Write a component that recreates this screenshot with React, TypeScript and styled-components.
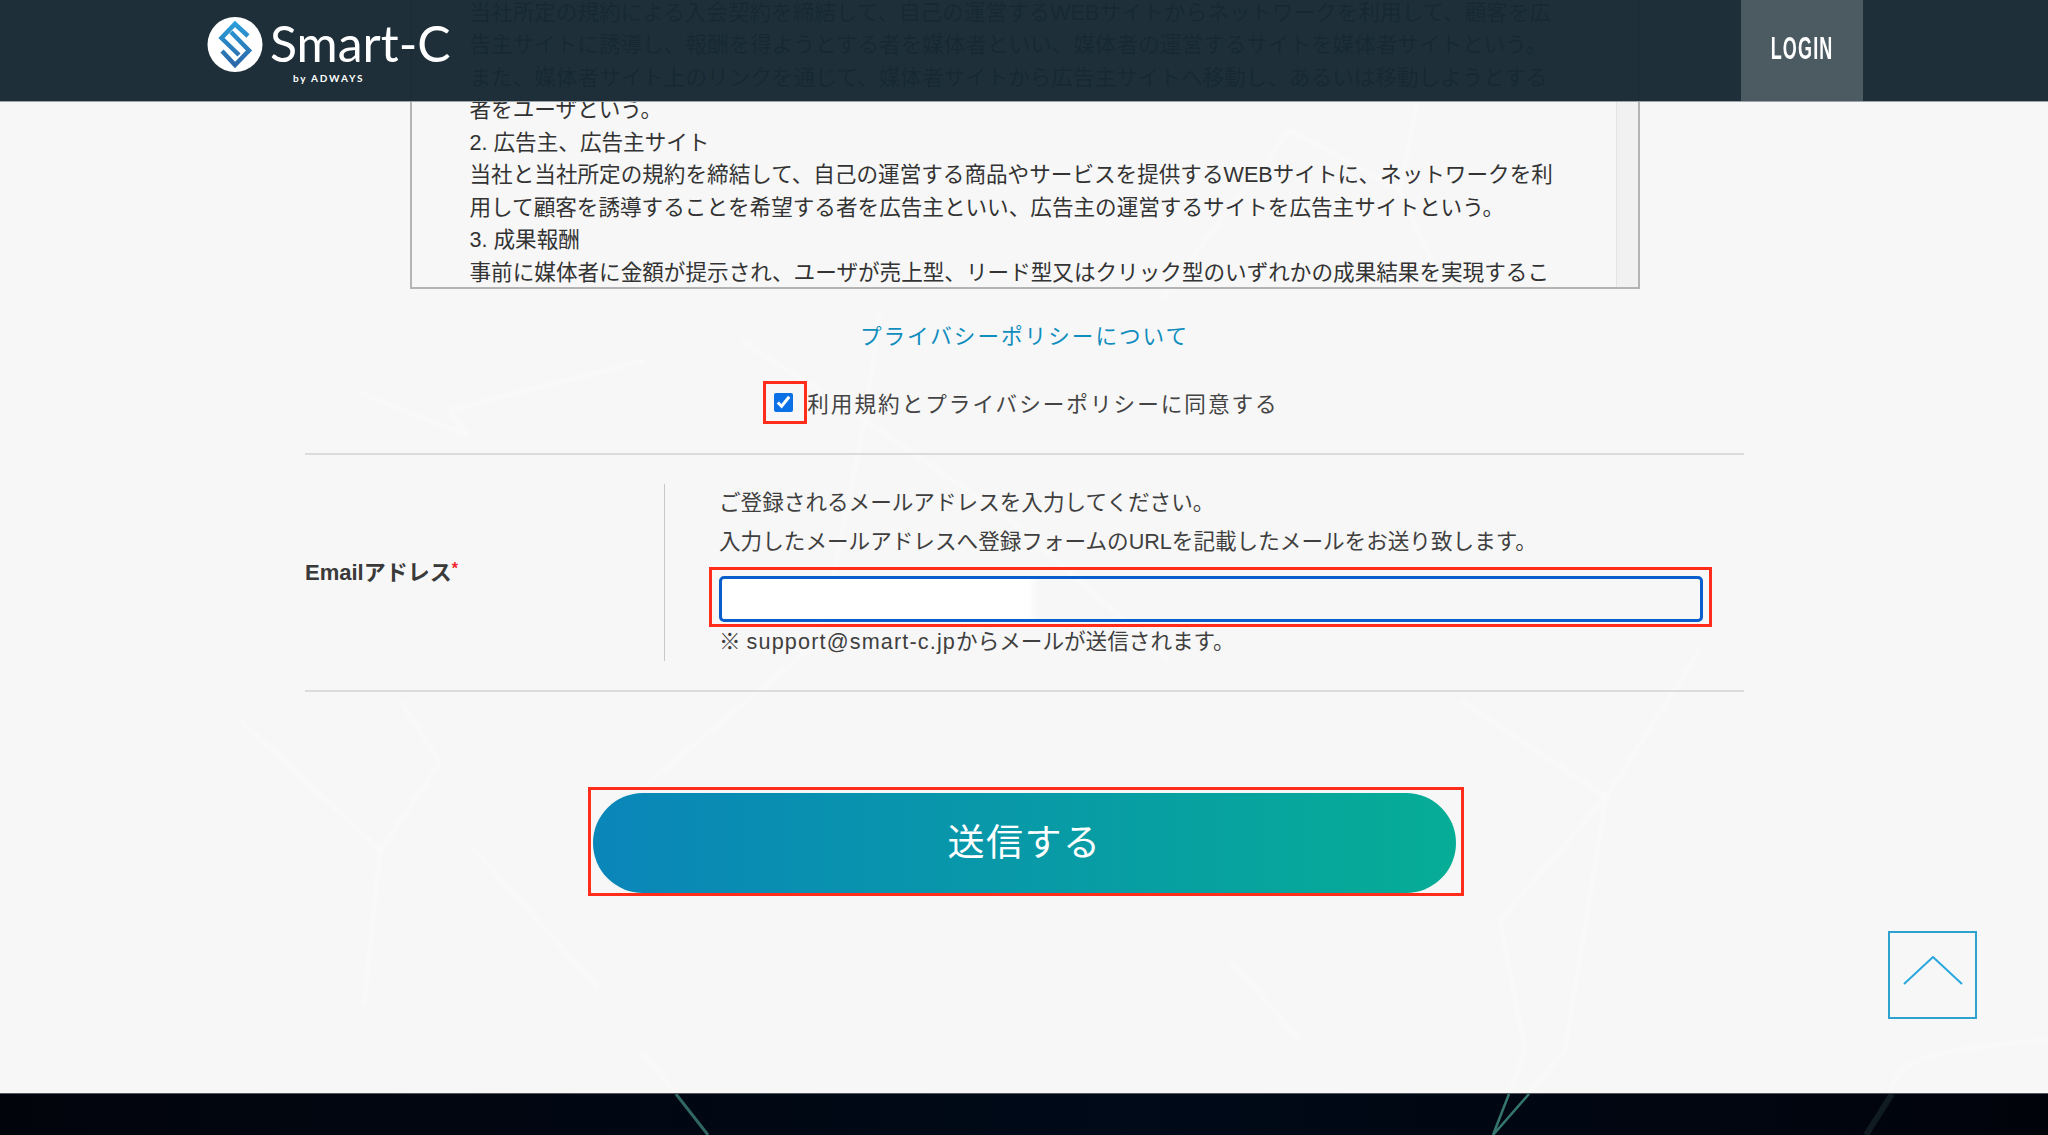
import React from "react";
import styled, { createGlobalStyle } from "styled-components";

const GlobalStyle = createGlobalStyle`
  html, body {
    margin: 0;
    padding: 0;
    background: #f7f7f7;
    color: #333;
    font-family: "Liberation Sans", "Noto Sans CJK JP", sans-serif;
  }
  * {
    box-sizing: border-box;
  }
`;

const Page = styled.div`
  position: relative;
  display: flex;
  flex-direction: column;
  height: 1135px;
  overflow: hidden;
`;

const Backdrop = styled.svg`
  position: absolute;
  inset: 0;
  width: 100%;
  height: 100%;
  filter: blur(2px);
`;

const Header = styled.header`
  position: absolute;
  top: 0;
  left: 0;
  right: 0;
  z-index: 2;
  display: flex;
  justify-content: space-between;
  height: 102px;
  padding: 0 185px 0 207px;
  background: rgba(23, 40, 51, 0.97);
  border-bottom: 1px solid #9aa3a8;
`;

const Logo = styled.div`
  display: flex;
  gap: 7px;
  padding-top: 17px;
`;

const LogoName = styled.div`
  display: flex;
  flex-direction: column;
  align-items: flex-start;
  padding-top: 3px;
  color: #fff;
`;

const LogoTitle = styled.span`
  font-family: Lato, sans-serif;
  font-weight: 400;
  font-size: 50px;
  line-height: 46px;
`;

const LogoSub = styled.span`
  margin: 6px 0 0 23px;
  font-family: Lato, sans-serif;
  font-size: 10px;
  font-weight: 700;
  line-height: 12px;
  letter-spacing: 1.8px;
`;

const LoginLink = styled.a`
  display: flex;
  justify-content: center;
  align-items: center;
  width: 122px;
  height: 101px;
  padding-bottom: 4px;
  background: #4c5a62;
  color: #fff;
  font-size: 31px;
  font-weight: 700;
  letter-spacing: 2px;

  span {
    transform: scaleX(0.58);
  }
`;

const Main = styled.main`
  position: relative;
  z-index: 1;
  display: flex;
  flex-direction: column;
  align-items: center;
  width: 1439px;
  margin-left: 305px;
`;

const TermsBox = styled.div`
  width: 1230px;
  height: 289px;
  padding-left: 58px;
  border: 2px solid #b4b4b4;
  border-top: none;
  overflow: hidden;
  position: relative;
  font-size: 21.6px;
  line-height: 32.45px;
  white-space: nowrap;

  &::after {
    content: "";
    position: absolute;
    top: 0;
    right: 0;
    bottom: 0;
    width: 21px;
    background: #f1f1f1;
    border-left: 1px solid #e4e4e4;
  }
`;

const TermsText = styled.div`
  margin-top: -3px;
`;

const PolicyLink = styled.a`
  margin-top: 32px;
  color: #0f8dbd;
  font-size: 21.6px;
  line-height: 32px;
  letter-spacing: 2px;
`;

const ConsentRow = styled.label`
  display: flex;
  align-items: center;
  margin-top: 28px;
  margin-right: 7px;
  font-size: 21.6px;
  letter-spacing: 2px;
  color: #444;
`;

const CheckFrame = styled.span`
  display: flex;
  justify-content: center;
  align-items: center;
  width: 44px;
  height: 43px;
  border: 3px solid #ff2d1a;

  input {
    width: 19px;
    height: 19px;
    margin: 0 3px 0 0;
    accent-color: #0b6fe6;
  }
`;

const FormRow = styled.section`
  display: grid;
  grid-template-columns: 359px 1fr;
  width: 100%;
  margin-top: 29px;
  padding: 29px 0;
  border-top: 2px solid #dcdcdc;
  border-bottom: 2px solid #dcdcdc;
`;

const FieldLabel = styled.div`
  align-self: center;
  margin-top: -5px;
  font-size: 22px;
  font-weight: 700;
  color: #3a3a3a;

  em {
    color: #f0282c;
    font-style: normal;
    font-size: 16px;
    vertical-align: 6px;
  }
`;

const FieldBody = styled.div`
  padding-left: 54px;
  border-left: 1px solid #c8c8c8;
  font-size: 21.6px;
  line-height: 39px;
  color: #3f3f3f;
`;

const FieldHints = styled.div`
  margin-top: -1px;
`;

const InputFrame = styled.div`
  width: 1003px;
  height: 60px;
  margin: 6px 0 0 -10px;
  padding: 6px 6px 0 7px;
  border: 3px solid #ff2d1a;
`;

const EmailInput = styled.input`
  display: block;
  width: 100%;
  height: 46px;
  border: 3px solid #0a5ecb;
  border-radius: 5px;
  outline: none;
  background: linear-gradient(90deg, #fff 306px, rgba(255, 255, 255, 0) 316px);
`;

const Note = styled.div`
  padding-bottom: 5px;
  line-height: 29px;
`;

const NoteMail = styled.span`
  letter-spacing: 1.15px;
`;

const SubmitFrame = styled.div`
  width: 876px;
  height: 109px;
  margin: 95px 0 0 3px;
  padding: 3px 0 0 2px;
  border: 3px solid #ff2d1a;
`;

const SubmitButton = styled.button`
  display: block;
  width: 863px;
  height: 100px;
  padding: 0 0 6px;
  border: none;
  border-radius: 50px;
  background: linear-gradient(90deg, #0a86b9, #06ad96);
  color: #fff;
  font-family: inherit;
  font-size: 37px;
  letter-spacing: 1.5px;
`;

const PageTop = styled.a`
  position: absolute;
  right: 71px;
  bottom: 116px;
  z-index: 2;
  display: flex;
  justify-content: center;
  align-items: center;
  width: 89px;
  height: 88px;
  padding-bottom: 8px;
  border: 2px solid #2ea2cf;
`;

const Footer = styled.footer`
  position: relative;
  margin-top: auto;
  height: 42px;
  background: linear-gradient(90deg, #02040c, #000a18 55%, #01030b);
  border-top: 1px solid #55585d;

  svg {
    display: block;
    width: 100%;
    height: 100%;
  }
`;

const termsLines = [
  "当社所定の規約による入会契約を締結して、自己の運営するWEBサイトからネットワークを利用して、顧客を広",
  "告主サイトに誘導し、報酬を得ようとする者を媒体者といい、媒体者の運営するサイトを媒体者サイトという。",
  "また、媒体者サイト上のリンクを通じて、媒体者サイトから広告主サイトへ移動し、あるいは移動しようとする",
  "者をユーザという。",
  "2. 広告主、広告主サイト",
  "当社と当社所定の規約を締結して、自己の運営する商品やサービスを提供するWEBサイトに、ネットワークを利",
  "用して顧客を誘導することを希望する者を広告主といい、広告主の運営するサイトを広告主サイトという。",
  "3. 成果報酬",
  "事前に媒体者に金額が提示され、ユーザが売上型、リード型又はクリック型のいずれかの成果結果を実現するこ",
];

// faint white network drawn behind the form
const networkLines = [
  "M357 392 L467 435 L450 410 L646 360",
  "M440 763 L380 850 L364 1007",
  "M470 845 L600 990",
  "M240 720 L380 850",
  "M440 763 L400 700",
  "M865 420 L820 640 L640 790",
  "M865 420 L1010 520 L1170 660",
  "M865 420 L740 340 M865 420 L880 310",
  "M1417 102 L1400 190 L1443 288",
  "M1400 190 L1290 130 L1160 300",
  "M1606 797 L1500 920 L1525 1050 L1510 1093",
  "M1606 797 L1565 1050 L1529 1093",
  "M1606 797 L1460 700 M1606 797 L1700 650",
  "M640 1050 L676 1093",
  "M1230 960 L1300 1040",
  "M1890 1093 C1900 1060 1920 1050 2048 1040",
];

function App() {
  return (
    <Page>
      <GlobalStyle />
      <Backdrop viewBox="0 0 2048 1135">
        {networkLines.map((d) => (
          <path key={d} d={d} fill="none" stroke="#fff" strokeWidth="4" opacity="0.4" />
        ))}
      </Backdrop>

      <Header>
        <Logo>
          <svg width="56" height="55" viewBox="0 0 56 55">
            <defs>
              <linearGradient id="logoBlue" x1="0" y1="0" x2="0" y2="1">
                <stop offset="0" stopColor="#2a9dd8" />
                <stop offset="1" stopColor="#2b67a8" />
              </linearGradient>
            </defs>
            <circle cx="28" cy="27.5" r="27.5" fill="#fff" />
            <path
              d="M41 19 L28 7 L14.5 21 L32 38 M15 34 L28 48 L42 33.5 L24 15"
              fill="none"
              stroke="url(#logoBlue)"
              strokeWidth="4.5"
            />
          </svg>
          <LogoName>
            <LogoTitle>Smart-C</LogoTitle>
            <LogoSub>by ADWAYS</LogoSub>
          </LogoName>
        </Logo>
        <LoginLink>
          <span>LOGIN</span>
        </LoginLink>
      </Header>

      <Main>
        <TermsBox>
          <TermsText>
            {termsLines.map((line) => (
              <div key={line}>{line}</div>
            ))}
          </TermsText>
        </TermsBox>

        <PolicyLink>プライバシーポリシーについて</PolicyLink>

        <ConsentRow>
          <CheckFrame>
            <input type="checkbox" defaultChecked />
          </CheckFrame>
          利用規約とプライバシーポリシーに同意する
        </ConsentRow>

        <FormRow>
          <FieldLabel>
            Emailアドレス<em>*</em>
          </FieldLabel>
          <FieldBody>
            <FieldHints>
              <div>ご登録されるメールアドレスを入力してください。</div>
              <div>入力したメールアドレスへ登録フォームのURLを記載したメールをお送り致します。</div>
            </FieldHints>
            <InputFrame>
              <EmailInput type="email" />
            </InputFrame>
            <Note>
              ※ <NoteMail>support@smart-c.jp</NoteMail>からメールが送信されます。
            </Note>
          </FieldBody>
        </FormRow>

        <SubmitFrame>
          <SubmitButton>送信する</SubmitButton>
        </SubmitFrame>
      </Main>

      <PageTop>
        <svg width="60" height="30" viewBox="0 0 60 30">
          <path d="M1 28 L30 1 L59 28" fill="none" stroke="#2aa7de" strokeWidth="2" />
        </svg>
      </PageTop>

      <Footer>
        <svg viewBox="0 0 2048 42" preserveAspectRatio="none">
          <path d="M676 0 L708 42" stroke="#3d7f78" strokeWidth="3" opacity="0.8" />
          <path d="M1509 0 L1493 42 M1529 0 L1493 42" stroke="#3f8a80" strokeWidth="2.5" opacity="0.85" />
          <path d="M1892 0 L1866 42" stroke="#2c4648" strokeWidth="6" opacity="0.35" />
        </svg>
      </Footer>
    </Page>
  );
}

export default App;
